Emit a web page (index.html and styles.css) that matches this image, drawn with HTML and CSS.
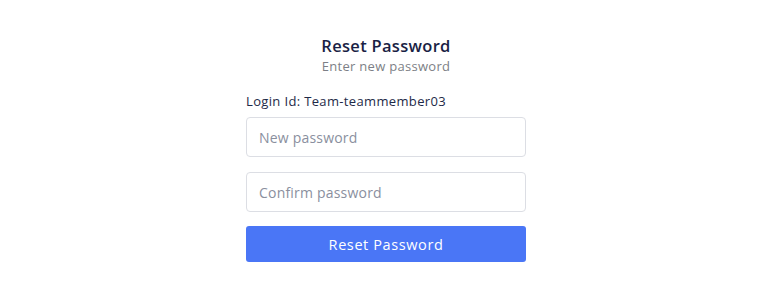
FILE: index.html
```html
<!DOCTYPE html>
<html lang="en">
<head>
<meta charset="utf-8">
<title>Reset Password</title>
<link rel="stylesheet" href="styles.css">
</head>
<body>
<main class="page">
  <form class="card">
    <h1 class="title">Reset Password</h1>
    <p class="subtitle">Enter new password</p>
    <p class="login-id">Login Id: Team-teammember03</p>
    <input class="field" type="password" placeholder="New password">
    <input class="field" type="password" placeholder="Confirm password">
    <button class="submit" type="button">Reset Password</button>
  </form>
</main>
</body>
</html>
```
FILE: styles.css
```css
* { box-sizing: border-box; }
html, body { margin: 0; padding: 0; background: #fff; }
body { font-family: "Open Sans", "Liberation Sans", sans-serif; }
.page {
  width: 770px;
  height: 304px;
  display: flex;
  justify-content: center;
  padding-top: 36px;
}
.card {
  width: 280px;
  display: flex;
  flex-direction: column;
  margin-left: 2px;
}
.title {
  margin: 0;
  text-align: center;
  font-size: 16.5px;
  font-weight: 600;
  line-height: 20px;
  letter-spacing: 0.3px;
  color: #1a1f45;
}
.subtitle {
  margin: 1px 0 0;
  text-align: center;
  font-size: 13px;
  line-height: 18px;
  color: #7d7f86;
  letter-spacing: 0.3px;
}
.login-id {
  margin: 17px 0 0;
  font-size: 13px;
  line-height: 18px;
  letter-spacing: 0.35px;
  color: #1e2a48;
}
.field {
  margin-top: 7px;
  height: 40px;
  border: 1px solid #dcdee4;
  border-radius: 4px;
  padding: 0 12px;
  font-family: inherit;
  font-size: 14px;
  color: #333;
  outline: none;
}
.field + .field { margin-top: 15px; }
.field::placeholder { color: #8a8f9e; letter-spacing: 0.2px; }
.submit {
  margin-top: 14px;
  height: 36px;
  border: none;
  border-radius: 3px;
  background: #4a76f6;
  color: #fff;
  font-family: inherit;
  font-size: 14.5px;
  letter-spacing: 0.6px;
}
```
